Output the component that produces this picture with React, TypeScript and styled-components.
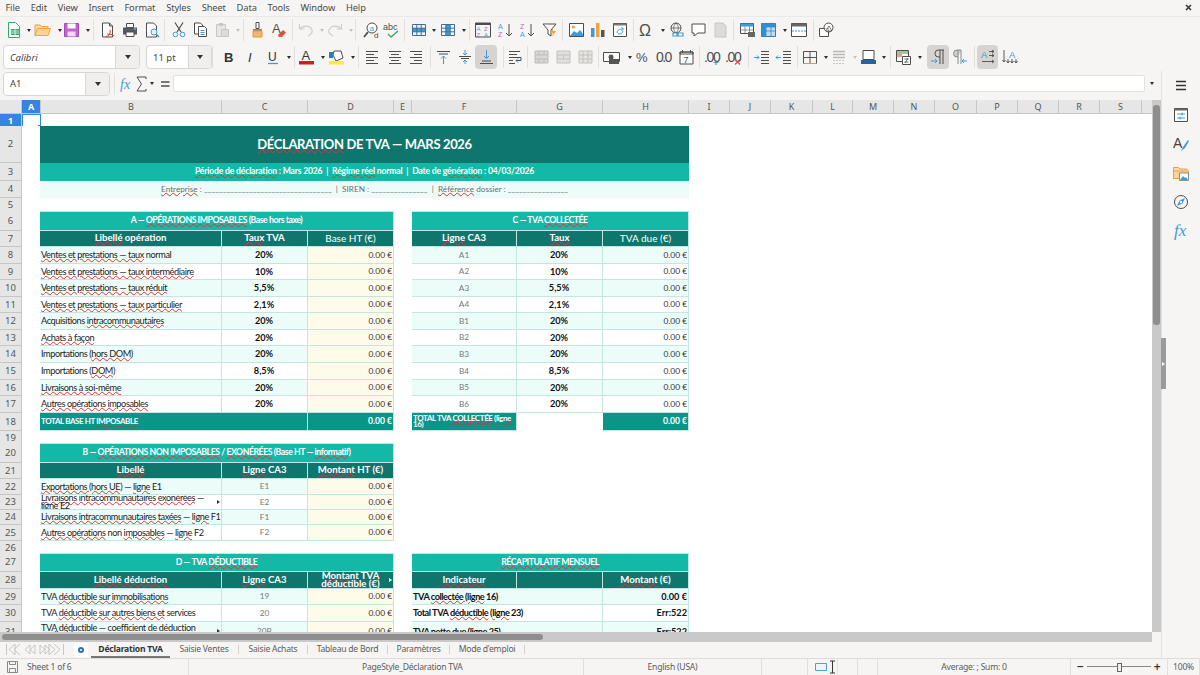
import type { ReactNode } from "react";
import styled, { createGlobalStyle } from "styled-components";

// ---------- Global Styles ----------
const GlobalStyle = createGlobalStyle`
  * { box-sizing: border-box; }
  html, body { margin: 0; height: 100%; overflow: hidden; background: #f6f5f4; }
  body { font-family: "Noto Sans", "Open Sans", sans-serif; color: #3d3d3d; }
`;

const DARK = "#0f766e";
const TEAL = "#14b8a6";
const TOTAL = "#0d9488";
const TINT = "#ecfdf9";
const INPUT = "#fffbeb";
const LINE = "#c3e6e0";
const CELL_FONT = `Lato, "Open Sans", sans-serif`;

// ---------- shell ----------
const Shell = styled.div`
  width: 1200px;
  height: 675px;
  display: flex;
  flex-direction: column;
  overflow: hidden;
`;
const MenuBar = styled.div`
  height: 17px;
  display: flex;
  align-items: center;
  border-bottom: 1px solid #ebe9e7;
  font-size: 9.3px;
  letter-spacing: -0.1px;
`;
const MenuItem = styled.span`
  padding: 0 5.4px;
  color: #4a4a4a;
`;
const CloseMark = styled.span`
  margin-left: auto;
  margin-right: 8px;
  display: flex;
`;
const Toolbar = styled.div<{ $h: number; $pad: number }>`
  height: ${(p) => p.$h}px;
  padding-left: ${(p) => p.$pad}px;
  display: flex;
  align-items: center;
`;
const Tool = styled.div<{ $w: number; $on?: boolean }>`
  width: ${(p) => p.$w}px;
  height: 24px;
  flex: none;
  display: flex;
  align-items: center;
  justify-content: ${(p) => (p.$on ? "center" : "flex-start")};
  border-radius: 4px;
  background: ${(p) => (p.$on ? "#d6d3d0" : "transparent")};
`;
const Sep = styled.div<{ $w: number }>`
  width: ${(p) => p.$w}px;
  height: 22px;
  flex: none;
  border-left: 1px solid #e2e0dd;
`;
const Drop = styled.div<{ $w: number; $dim?: boolean }>`
  width: ${(p) => p.$w}px;
  flex: none;
  display: flex;
  justify-content: center;
  &::before {
    content: "";
    border: 2.5px solid transparent;
    border-top: 3px solid ${(p) => (p.$dim ? "#c4c4c4" : "#2e2e2e")};
    border-bottom: 0;
  }
`;
const Combo = styled.div<{ $w: number; $btn: number; $mr: number }>`
  width: ${(p) => p.$w}px;
  height: 24px;
  margin-right: ${(p) => p.$mr}px;
  flex: none;
  display: grid;
  grid-template-columns: 1fr ${(p) => p.$btn}px;
  border: 1px solid #d8d5d2;
  border-radius: 4px;
  background: #fff;
  overflow: hidden;
`;
const ComboText = styled.div<{ $italic?: boolean }>`
  display: flex;
  align-items: center;
  padding-left: 6px;
  font-size: 9.5px;
  font-style: ${(p) => (p.$italic ? "italic" : "normal")};
  color: #444;
`;
const ComboBtn = styled.div`
  display: flex;
  align-items: center;
  justify-content: center;
  background: #f1efed;
  border-left: 1px solid #d8d5d2;
  &::before {
    content: "";
    border: 3.5px solid transparent;
    border-top: 4px solid #333;
    border-bottom: 0;
  }
`;
const Body = styled.div`
  height: 588px;
  display: flex;
`;
const Work = styled.div`
  width: 1161px;
  display: flex;
  flex-direction: column;
`;
const FormulaBar = styled.div`
  height: 29px;
  display: flex;
  align-items: center;
  padding: 0 0 3px 3px;
`;
const FormulaInput = styled.div`
  width: 972px;
  height: 17px;
  background: #fff;
  border: 1px solid #e4e2df;
  border-radius: 2px;
  flex: none;
`;

// ---------- sheet ----------
const SheetArea = styled.div`
  height: 532px;
  display: flex;
`;
const Viewport = styled.div`
  width: 1152px;
  overflow: hidden;
  background: #fff;
`;
const ColHeads = styled.div`
  height: 14px;
  display: flex;
  background: #e6e6e6;
  border-bottom: 1px solid #c6c6c6;
`;
const ColHead = styled.div<{ $w: number; $on?: boolean }>`
  width: ${(p) => p.$w}px;
  flex: none;
  display: flex;
  align-items: center;
  justify-content: center;
  font-size: 9px;
  color: ${(p) => (p.$on ? "#fff" : "#555")};
  font-weight: ${(p) => (p.$on ? 700 : 400)};
  background: ${(p) => (p.$on ? "#3584e4" : "transparent")};
  border-right: 1px solid #c6c6c6;
`;
const Row = styled.div<{ $h: number }>`
  height: ${(p) => p.$h}px;
  display: grid;
  grid-template-columns: 22px 18px 182px 86px 86px 18px 105px 86px 86px;
  overflow: hidden;
`;
const RowHead = styled.div<{ $on?: boolean }>`
  display: flex;
  align-items: center;
  justify-content: center;
  font-size: 9.5px;
  color: ${(p) => (p.$on ? "#fff" : "#555")};
  font-weight: ${(p) => (p.$on ? 700 : 400)};
  background: ${(p) => (p.$on ? "#3584e4" : "#e6e6e6")};
  border-right: 1px solid #c6c6c6;
  border-bottom: 1px solid #c6c6c6;
`;
const CursorCell = styled.div`
  position: relative;
  width: 19px;
  border: 1px solid #3584e4;
  &::after {
    content: "";
    position: absolute;
    right: -1px;
    bottom: -1px;
    width: 3px;
    height: 3px;
    background: #3584e4;
  }
`;
const Blank = styled.div<{ $span?: number }>`
  grid-column: span ${(p) => p.$span ?? 1};
`;

type Kind = "title" | "band" | "info" | "section" | "head" | "label" | "strong" | "rate" | "code" | "money" | "total" | "totalMoney";

const edge = `border-right:1px solid ${LINE};border-bottom:1px solid ${LINE};`;
const kindCss: Record<Kind, string> = {
  title: `background:${DARK};color:#fff;font-weight:700;font-size:13px;letter-spacing:-0.35px;justify-content:center;`,
  band: `background:${TEAL};color:#fff;font-weight:700;font-size:8.6px;letter-spacing:-0.18px;justify-content:center;`,
  info: `background:${TINT};color:#6b6b6b;font-size:8.2px;justify-content:center;`,
  section: `background:${TEAL};color:#fff;font-weight:700;font-size:8.7px;letter-spacing:-0.45px;justify-content:center;border:1px solid ${LINE};border-left:0;`,
  head: `background:${DARK};color:#fff;font-weight:700;font-size:9.6px;justify-content:center;text-align:center;${edge}`,
  label: `color:#222;font-size:9.2px;letter-spacing:-0.42px;padding-left:1px;${edge}`,
  strong: `color:#111;font-weight:700;font-size:9.2px;letter-spacing:-0.47px;padding-left:1px;${edge}`,
  rate: `color:#111;font-weight:700;font-size:9.2px;padding-right:1px;${edge}`,
  code: `color:#777;font-size:8.2px;justify-content:center;${edge}`,
  money: `color:#333;font-size:8.4px;justify-content:flex-end;padding-right:1px;${edge}`,
  total: `background:${TOTAL};color:#fff;font-weight:700;font-size:8px;letter-spacing:-0.4px;padding-left:1px;${edge}`,
  totalMoney: `background:${TOTAL};color:#fff;font-weight:700;font-size:8.6px;justify-content:flex-end;padding-right:1px;${edge}`,
};

const Cell = styled.div<{ $k: Kind; $span?: number; $fill?: string; $align?: string; $thin?: boolean }>`
  position: relative;
  grid-column: span ${(p) => p.$span ?? 1};
  display: flex;
  align-items: center;
  font-family: ${CELL_FONT};
  line-height: 1.02;
  overflow: hidden;
  white-space: pre;
  ${(p) => kindCss[p.$k]}
  ${(p) => (p.$fill ? `background:${p.$fill};` : "")}
  ${(p) => (p.$align ? `justify-content:${p.$align};` : "")}
  ${(p) => (p.$thin ? "font-weight:400;font-size:10px;" : "")}
`;
const Wrapped = styled.span<{ $pr?: number }>`
  white-space: normal;
  display: block;
  line-height: 0.84;
  padding-right: ${(p) => p.$pr ?? 0}px;
`;
const Wave = styled.span`
  text-decoration: underline wavy #d9362c;
  text-decoration-thickness: 1px;
  text-underline-offset: 0;
`;
const Clip = styled.i<{ $color?: string }>`
  position: absolute;
  right: 1px;
  top: 50%;
  margin-top: -2px;
  border: 2px solid transparent;
  border-left: 3px solid ${(p) => p.$color ?? "#333"};
  border-right: 0;
`;

// ---------- scrollbars ----------
const VScroll = styled.div`
  width: 9px;
  background: #c9c9c9;
  padding: 5px 1px 0;
`;
const VThumb = styled.div`
  height: 220px;
  background: #8e8e8e;
  border-radius: 3px;
`;
const HScroll = styled.div`
  height: 10px;
  width: 1152px;
  background: #c9c9c9;
  padding: 2px;
`;
const HThumb = styled.div`
  width: 541px;
  height: 6px;
  background: #8e8e8e;
  border-radius: 3px;
`;

// ---------- tabs ----------
const TabBar = styled.div`
  height: 16px;
  display: flex;
  align-items: center;
  font-size: 8.6px;
  letter-spacing: -0.25px;
  padding-left: 5px;
`;
const NavIcons = styled.div`
  width: 69px;
  flex: none;
  display: flex;
  align-items: center;
`;
const NewTab = styled.div`
  width: 14px;
  height: 14px;
  margin-right: 3px;
  flex: none;
  display: flex;
  align-items: center;
  justify-content: center;
  background: #fff;
`;
const Tab = styled.div<{ $on?: boolean; $w: number }>`
  width: ${(p) => p.$w}px;
  height: 16px;
  flex: none;
  display: flex;
  align-items: center;
  justify-content: center;
  color: ${(p) => (p.$on ? "#333" : "#5c5c5c")};
  font-weight: ${(p) => (p.$on ? 700 : 400)};
  border-bottom: 2px solid ${(p) => (p.$on ? "#777" : "transparent")};
`;
const TabSep = styled.div`
  width: 1px;
  height: 9px;
  flex: none;
  background: #d5d3d0;
`;

// ---------- sidebar ----------
const Sidebar = styled.div`
  width: 39px;
  border-left: 1px solid #e4e2df;
  display: flex;
  flex-direction: column;
  align-items: center;
  gap: 11px;
  padding-top: 6px;
`;
const SideIcon = styled.div`
  width: 18px;
  height: 18px;
  display: flex;
  align-items: center;
  justify-content: center;
`;
const Collapse = styled.div`
  position: absolute;
  left: 1161px;
  top: 338px;
  width: 5px;
  height: 51px;
  background: #9b9b9b;
  display: flex;
  align-items: center;
  &::before {
    content: "";
    border: 2px solid transparent;
    border-left: 3px solid #fff;
    border-right: 0;
    margin-left: 1px;
  }
`;

// ---------- status ----------
const StatusBar = styled.div`
  height: 17px;
  display: flex;
  align-items: center;
  border-top: 1px solid #dedcd9;
  font-size: 8.6px;
  letter-spacing: -0.25px;
  color: #5c5c5c;
`;
const StatusCell = styled.div<{ $w: number; $pad?: number; $center?: boolean; $gap?: number }>`
  width: ${(p) => p.$w}px;
  height: 16px;
  flex: none;
  display: flex;
  align-items: center;
  gap: ${(p) => p.$gap ?? 9}px;
  padding-left: ${(p) => p.$pad ?? 0}px;
  justify-content: ${(p) => (p.$center ? "center" : "flex-start")};
  border-right: 1px solid #e2e0dd;
`;
const ZoomLine = styled.div`
  width: 64px;
  height: 1px;
  background: #888;
  position: relative;
  &::after {
    content: "";
    position: absolute;
    left: 30px;
    top: -3px;
    width: 3px;
    height: 7px;
    background: #eee;
    border: 1px solid #666;
  }
`;
const ZoomSign = styled.span`
  font-size: 12px;
  font-weight: 600;
  color: #333;
  line-height: 1;
`;

// ---------- icons ----------
const Glyphs = styled.svg`
  overflow: visible;
  flex: none;
`;
const Svg = ({ children, w = 16, h = 16 }: { children: ReactNode; w?: number; h?: number }) => (
  <Glyphs width={w} height={h} viewBox={`0 0 ${w} ${h}`} fill="none" strokeWidth="1">
    {children}
  </Glyphs>
);
const Label = ({ x, y, s, c, t, b, i, ls, serif }: { x: number; y: number; s: number; c: string; t: string; b?: boolean; i?: boolean; ls?: number; serif?: boolean }) => (
  <text
    x={x}
    y={y}
    fontSize={s}
    fill={c}
    letterSpacing={ls}
    fontFamily={serif ? "Liberation Serif, serif" : "Liberation Sans, sans-serif"}
    fontWeight={b ? 700 : 400}
    fontStyle={i ? "italic" : "normal"}
  >
    {t}
  </text>
);
const INK = "#4d4d4d";
const BLUE = "#3d9bdc";
const GRAY = "#c9c7c4";
const gridLines = (c: string) => <path d="M1.5 2.5h13v11h-13zM1.5 6.2h13M1.5 9.8h13M5.8 2.5v11M10.2 2.5v11" stroke={c} />;

const icons: Record<string, ReactNode> = {
  close: (
    <Svg w={7} h={7}>
      <path d="m1 1 5 5M6 1 1 6" stroke="#333" strokeWidth="1.5" />
    </Svg>
  ),
  newDoc: (
    <Svg w={14}>
      <path d="M1.5 .5h7l4 4v11h-11z" stroke="#3aa76d" fill="#fff" />
      <path d="M4 7h8v6H4z" fill="#3aa76d" />
      <path d="M4 9h8M4 11h8M8 7v6" stroke="#fff" strokeWidth=".7" />
    </Svg>
  ),
  open: (
    <Svg w={17}>
      <path d="M1 13.5V3h5l1.5 1.5H14v2" stroke="#e9a24a" fill="#fbdca9" />
      <path d="M1 13.5 3.5 6.5h13l-2.5 7z" stroke="#e9a24a" fill="#fcd49a" />
    </Svg>
  ),
  save: (
    <Svg w={15}>
      <path d="M.5 1.5h14v13H.5z" fill="#c265cf" stroke="#a44bb3" />
      <path d="M3.5 1.5h8v5h-8z" fill="#fff" />
      <path d="M3.5 9.5h8v5h-8z" fill="#f2d8f6" />
    </Svg>
  ),
  pdf: (
    <Svg w={14}>
      <path d="M1.5 1h7l3 3v11h-10z" stroke={INK} fill="#fff" />
      <path d="M8.5 1v3h3" stroke={INK} />
      <path d="M5 15c3-1 5-4 4-7M6 12c2 0 5 0 7 2" stroke="#e0503d" strokeWidth="1.2" />
    </Svg>
  ),
  print: (
    <Svg>
      <path d="M4.5 1.5h7v4h-7z" stroke={INK} fill="#fff" />
      <path d="M1 5.5h14v7H1z" fill="#555b61" />
      <path d="M4 10h8v4.5H4z" fill="#fff" stroke={INK} />
      <path d="M12 7h2" stroke="#8fd0f5" />
    </Svg>
  ),
  preview: (
    <Svg w={15}>
      <path d="M1.5 1h7l3 3v11h-10z" stroke={INK} fill="#fff" />
      <circle cx="9" cy="10" r="3" stroke={BLUE} fill="#e4f3fc" />
      <path d="m11 12 3 3" stroke={BLUE} strokeWidth="1.4" />
    </Svg>
  ),
  cut: (
    <Svg w={14}>
      <path d="M3 .5 9 10M11 .5 5 10" stroke={INK} strokeWidth="1.2" />
      <circle cx="3.4" cy="12.5" r="2.3" stroke={BLUE} />
      <circle cx="10.6" cy="12.5" r="2.3" stroke={BLUE} />
    </Svg>
  ),
  copy: (
    <Svg w={15}>
      <path d="M1.5 1h6l2 2v9h-8z" stroke={INK} fill="#fff" />
      <path d="M5.5 4.5h6l2 2v8h-8z" stroke={INK} fill="#fff" />
      <path d="M7.5 8.5h4M7.5 10.5h4M7.5 12.5h4" stroke={BLUE} />
    </Svg>
  ),
  paste: (
    <Svg w={14}>
      <path d="M1.5 2.5h9v12h-9z" stroke={GRAY} fill="#e8e6e3" />
      <path d="M4 1h4v3H4z" fill={GRAY} />
      <path d="M6.5 7.5h7v7h-7z" fill="#dedcd9" stroke={GRAY} />
    </Svg>
  ),
  clone: (
    <Svg w={13}>
      <path d="M5 .5h3v6H5z" stroke={INK} fill="#fff" />
      <path d="M2 7h9v2H2z" fill="#888" />
      <path d="M2 9h9v6H2z" fill="#f5b56a" stroke="#e8973c" />
    </Svg>
  ),
  clear: (
    <Svg w={14}>
      <Label x={0} y={11} s={13} c={INK} t="A" />
      <path d="m6 13 5-5 3 2.5-4 4.5H7z" fill="#e0503d" />
    </Svg>
  ),
  undo: (
    <Svg>
      <path d="M1.5 2v5h5M2 7c3-4 10-4 12 1 1 3-2 5-4 6" stroke="#d0cecb" strokeWidth="1.2" />
    </Svg>
  ),
  redo: (
    <Svg>
      <path d="M14.5 2v5h-5M14 7C11 3 4 3 2 8c-1 3 2 5 4 6" stroke="#d0cecb" strokeWidth="1.2" />
    </Svg>
  ),
  find: (
    <Svg>
      <circle cx="9" cy="6" r="5" stroke={INK} fill="#fff" />
      <path d="M5 10 1 15" stroke={INK} strokeWidth="1.8" />
      <Label x={6.5} y={9} s={8} c={BLUE} t="a" />
      <Label x={11} y={16} s={8} c={INK} t="d" />
    </Svg>
  ),
  spell: (
    <Svg>
      <Label x={0} y={8} s={9} c={INK} t="abc" />
      <path d="m5 12 3 3 7-6" stroke="#3aa76d" strokeWidth="1.4" />
    </Svg>
  ),
  rowIns: (
    <Svg>
      <path d="M1.5 6.2h13v3.6h-13z" fill={BLUE} />
      {gridLines("#3f6f94")}
    </Svg>
  ),
  colIns: (
    <Svg>
      <path d="M5.8 2.5h4.4v11H5.8z" fill={BLUE} />
      {gridLines("#3f6f94")}
    </Svg>
  ),
  sort: (
    <Svg>
      <path d="M.5 1h15v14H.5z" stroke={INK} />
      <path d="M.5 1h15v2H.5z" fill={INK} />
      <Label x={1.5} y={9} s={6} c={BLUE} t="A" />
      <Label x={1.5} y={14.5} s={6} c="#b565cf" t="Z" />
      <Label x={9} y={9} s={6} c="#b565cf" t="Z" />
      <Label x={9} y={14.5} s={6} c={BLUE} t="A" />
    </Svg>
  ),
  asc: (
    <Svg>
      <Label x={0} y={7} s={7} c={BLUE} t="A" />
      <Label x={0} y={15} s={7} c="#b565cf" t="Z" />
      <path d="M11 2v12M8 11l3 3 3-3" stroke={INK} />
    </Svg>
  ),
  desc: (
    <Svg>
      <Label x={0} y={7} s={7} c="#b565cf" t="Z" />
      <Label x={0} y={15} s={7} c={BLUE} t="A" />
      <path d="M11 2v12M8 11l3 3 3-3" stroke={INK} />
    </Svg>
  ),
  filter: (
    <Svg>
      <path d="M1 2h13L9 8v6l-3-2V8z" stroke={INK} fill="#fff" />
      <path d="M11 6 8 11h3l-1 4 4-6h-3z" fill="#f0a33e" />
    </Svg>
  ),
  image: (
    <Svg w={15}>
      <path d="M.5 1.5h14v13H.5z" stroke={INK} fill="#fff" />
      <circle cx="4.5" cy="5" r="1.6" fill="#f2a04a" />
      <path d="m1 14 4-5 3 2 3-3 3 4v2z" fill={BLUE} />
    </Svg>
  ),
  chart: (
    <Svg w={14}>
      <path d="M0 6h3.5v9H0z" fill={BLUE} />
      <path d="M5 1h3.5v14H5z" fill="#f0a33e" />
      <path d="M10 8h3.5v7H10z" fill="#555" />
    </Svg>
  ),
  pivot: (
    <Svg w={14}>
      <path d="M.5 1.5h13v13H.5z" stroke={INK} fill="#fff" />
      <path d="M.5 1.5h13v2H.5z" fill="#777" />
      <path d="M4 11c0-3 3-4 6-4M8.5 5 10.5 7 8.5 9M10 9c0 2-2 3-5 3" stroke={BLUE} />
    </Svg>
  ),
  omega: (
    <Svg w={15}>
      <Label x={0} y={14} s={16} c={INK} t="Ω" />
    </Svg>
  ),
  link: (
    <Svg>
      <circle cx="7" cy="6" r="5" stroke={INK} />
      <path d="M2 6h10M7 1c-3 3-3 7 0 10M7 1c3 3 3 7 0 10" stroke={INK} strokeWidth=".7" />
      <path d="M4 11h4v3H4zM9 11h5v3H9z" stroke={BLUE} strokeWidth="1.2" fill="#fff" />
    </Svg>
  ),
  comment: (
    <Svg w={15}>
      <path d="M1 2h13v9H7l-4 3v-3H1z" stroke={INK} fill="#fff" />
    </Svg>
  ),
  headers: (
    <Svg w={13}>
      <path d="M1 1h8l3 3v11H1z" fill="#dddbd8" stroke={GRAY} />
    </Svg>
  ),
  tablePrint: (
    <Svg>
      <path d="M.5 1.5h13v10H.5z" stroke={INK} fill="#fff" />
      <path d="M.5 1.5h13v3H.5z" fill={BLUE} />
      <path d="M.5 8h13M5 4.5v7M9.5 4.5v7" stroke={INK} strokeWidth=".6" />
      <path d="M8 10h7v5H8z" fill="#666" />
    </Svg>
  ),
  freeze: (
    <Svg w={15}>
      <path d="M.5 1.5h14v13H.5z" fill="#bcdcf2" stroke="#2f7fb8" />
      <path d="M.5 5h14M5 1.5v13M.5 9h14M10 1.5v13" stroke="#2f7fb8" strokeWidth=".7" />
      <path d="M.5 1.5H5v13H.5z" fill="#2f8fd0" />
      <path d="M.5 1.5h14V5H.5z" fill="#2f8fd0" />
    </Svg>
  ),
  split: (
    <Svg>
      <path d="M.5 1.5h15v13H.5z" stroke={INK} fill="#fff" />
      <path d="M.5 1.5h15v3H.5z" fill="#666" />
      <path d="M1 9h14" stroke={BLUE} strokeDasharray="2 1" />
    </Svg>
  ),
  shapes: (
    <Svg w={15}>
      <path d="M.5 6.5h9v8h-9z" stroke={INK} fill="#fff" />
      <circle cx="9.5" cy="5.5" r="4.5" stroke={INK} fill="#fff" fillOpacity=".6" />
      <path d="m7 9 3-5 3 5z" stroke={INK} strokeWidth=".7" />
    </Svg>
  ),
  bold: (
    <Svg w={11}>
      <Label x={0} y={13} s={13} c="#333" t="B" b />
    </Svg>
  ),
  italic: (
    <Svg w={11}>
      <Label x={1} y={13} s={13} c="#333" t="I" i />
    </Svg>
  ),
  under: (
    <Svg w={11}>
      <Label x={0} y={12} s={12} c="#333" t="U" />
      <path d="M0 14.5h10" stroke={BLUE} strokeWidth="1.3" />
    </Svg>
  ),
  fontColor: (
    <Svg w={17}>
      <Label x={3.5} y={11} s={13} c="#333" t="A" />
      <path d="M1 12h15v3.5H1z" fill="#c9211e" />
    </Svg>
  ),
  highlight: (
    <Svg w={17}>
      <path d="m6 2 7 0 2 7-7 3-3-6z" stroke={INK} fill="#fff" />
      <path d="M1 3h4v6H1z" fill="#2a7fc4" />
      <path d="M1 12h15v3.5H1z" fill="#ffef2b" />
    </Svg>
  ),
  alignL: <Svg w={14}><path d="M1 2.5h12M1 5.5h8M1 8.5h12M1 11.5h8M1 14.5h12" stroke={INK} /></Svg>,
  alignC: <Svg w={14}><path d="M1 2.5h12M3 5.5h8M1 8.5h12M3 11.5h8M1 14.5h12" stroke={INK} /></Svg>,
  alignR: <Svg w={14}><path d="M1 2.5h12M5 5.5h8M1 8.5h12M5 11.5h8M1 14.5h12" stroke={INK} /></Svg>,
  vTop: (
    <Svg w={13}>
      <path d="M0 2.5h13M2 5h9" stroke={INK} />
      <path d="M6.5 15V7M4 9.5l2.5-2.5L9 9.5" stroke={BLUE} />
    </Svg>
  ),
  vMid: (
    <Svg w={12}>
      <path d="M0 7.5h12M2 9.5h8" stroke={INK} />
      <path d="M6 1v5M4 4l2 2 2-2M6 15v-4M4 13l2-2 2 2" stroke={BLUE} />
    </Svg>
  ),
  vBot: (
    <Svg w={13}>
      <path d="M0 14.5h13M2 12h9" stroke={INK} />
      <path d="M6.5 1v8M4 7l2.5 2.5L9 7" stroke={BLUE} />
    </Svg>
  ),
  wrap: (
    <Svg w={14}>
      <path d="M1 2.5h11M1 5.5h8M1 8.5h12v3H8M1 11.5h4M1 14.5h6" stroke={INK} />
      <path d="m10 9.5-2 2 2 2" stroke={BLUE} />
    </Svg>
  ),
  merge: (
    <Svg w={15}>
      <path d="M1 2h13v12H1z" fill="#dad8d5" stroke="#bdbbb8" />
      <path d="M1 6h13M1 10h13M5 2v4M10 2v4M5 10v4M10 10v4" stroke="#bdbbb8" />
    </Svg>
  ),
  merge2: (
    <Svg w={15}>
      <path d="M1 2h13v12H1z" fill="#e2e0dd" stroke="#c4c2bf" />
      <path d="M1 6h13M1 10h13M7.5 6v4" stroke="#c4c2bf" />
    </Svg>
  ),
  merge3: (
    <Svg w={15}>
      <path d="M1 2h13v12H1z" fill="#e6e4e1" stroke="#c4c2bf" />
      <path d="M1 6h13M1 10h13M5 2v12M10 2v12" stroke="#c4c2bf" />
    </Svg>
  ),
  currency: (
    <Svg w={18}>
      <path d="M.5 3.5h16v9H.5z" stroke={INK} fill="#fff" />
      <circle cx="8" cy="8" r="2.5" fill="#555" />
      <path d="M6 10h5v5H6zM11 10h5v5h-5z" fill="#555" />
    </Svg>
  ),
  percent: (
    <Svg w={12}>
      <Label x={0} y={13} s={13} c={INK} t="%" />
    </Svg>
  ),
  number: (
    <Svg>
      <Label x={0} y={13} s={14} c={INK} t="0.0" ls={-1.6} />
    </Svg>
  ),
  date: (
    <Svg w={15}>
      <path d="M1 3h13v12H1z" stroke={INK} fill="#fff" />
      <path d="M1 3h13v2H1zM3.5 1v3M11.5 1v3" stroke={INK} />
      <Label x={4.5} y={13.5} s={9} c={INK} t="7" />
    </Svg>
  ),
  addDec: (
    <Svg w={17}>
      <Label x={0} y={13} s={14} c={INK} t=".00" ls={-1.4} />
      <path d="M12 11v5M9.5 13.5h5" stroke={BLUE} strokeWidth="1.2" />
    </Svg>
  ),
  delDec: (
    <Svg w={17}>
      <Label x={0} y={13} s={14} c={INK} t=".00" ls={-1.4} />
      <path d="m10 10.5 5 5M15 10.5l-5 5" stroke="#e0503d" strokeWidth="1.2" />
    </Svg>
  ),
  indent: (
    <Svg w={15}>
      <path d="M7 2.5h8M7 5.5h8M7 8.5h8M7 11.5h8M7 14.5h8" stroke={INK} />
      <path d="M0 8.5h5M3 6.5l2 2-2 2" stroke={BLUE} />
    </Svg>
  ),
  outdent: (
    <Svg w={15}>
      <path d="M7 2.5h8M7 5.5h8M7 8.5h8M7 11.5h8M7 14.5h8" stroke={INK} />
      <path d="M0 8.5h5M2 6.5l-2 2 2 2" stroke={BLUE} />
    </Svg>
  ),
  borders: (
    <Svg w={14}>
      <path d="M.5 2.5h13v12H.5zM7 2.5v12M.5 8.5h13" stroke="#555" />
      <path d="M.5 14.5h13" stroke="#e8973c" />
    </Svg>
  ),
  borderStyle: (
    <Svg w={14}>
      <path d="M1 2.5h12M1 5.5h12M1 8.5h12" stroke="#bbb9b6" strokeWidth="1.4" />
      <path d="M1 11.5h12M1 14.5h12" stroke="#c9c7c4" strokeDasharray="2 1" />
    </Svg>
  ),
  borderColor: (
    <Svg w={17}>
      <path d="M3 1.5h11v9H3z" stroke={INK} fill="#fff" />
      <path d="M1 11h15v4H1z" fill="#1e66a8" />
    </Svg>
  ),
  conditional: (
    <Svg w={15}>
      <path d="M.5 1.5h12v11H.5z" stroke={INK} fill="#fff" />
      <path d="M1 2h11v3H1z" fill="#8fcf9a" />
      <path d="M1 5h5v3H1z" fill="#ee9a8c" />
      <path d="M6.5 7.5h8v8h-8z" stroke={INK} fill="#fff" />
      <path d="M8.5 10h4M8.5 13h4M12 9l-3 5" stroke={INK} strokeWidth=".8" />
    </Svg>
  ),
  ltr: (
    <Svg w={14}>
      <path d="M13 1H7.5a3.5 3.5 0 0 0 0 7H9M9 1v14M12 1v14" stroke={INK} />
      <path d="M0 12h6M4 10l2 2-2 2" stroke={BLUE} />
    </Svg>
  ),
  rtl: (
    <Svg w={14}>
      <path d="M8 1H4a3 3 0 0 0 0 7h1" stroke="#8a8a8a" fill="#cfcdca" />
      <path d="M5 1v14M8 1v14" stroke="#8a8a8a" />
      <path d="M14 12H9M11 10l-2 2 2 2" stroke={BLUE} />
    </Svg>
  ),
  horiz: (
    <Svg w={14}>
      <Label x={0} y={9} s={9.5} c={BLUE} t="A" />
      <path d="M8 2.5h5M11 1l2 1.5L11 4M8 6.5h5M11 5l2 1.5L11 8M1 12.5h12M11 11l2 1.5-2 1.5" stroke={INK} strokeWidth=".9" />
    </Svg>
  ),
  vert: (
    <Svg>
      <Label x={7} y={9} s={9.5} c={BLUE} t="A" />
      <path d="M2 1v12M.5 11 2 13l1.5-2M6 10v4M4.5 12 6 14l1.5-2M10 10v4M8.5 12 10 14l1.5-2M14 10v4M12.5 12 14 14l1.5-2" stroke={INK} strokeWidth=".9" />
    </Svg>
  ),
  fx: (
    <Svg w={12}>
      <Label x={0} y={13} s={14} c={BLUE} t="fx" i serif />
    </Svg>
  ),
  sigma: (
    <Svg w={11}>
      <path d="M10 3V1H1l4.5 7L1 15h9v-2" stroke={INK} />
    </Svg>
  ),
  equals: (
    <Svg w={9}>
      <path d="M0 6h8.5M0 10h8.5" stroke={INK} strokeWidth="1.6" />
    </Svg>
  ),
  menu: (
    <Svg w={12}>
      <path d="M1 3.5h10M1 7.5h10M1 11.5h10" stroke="#333" strokeWidth="1.3" />
    </Svg>
  ),
  props: (
    <Svg w={14}>
      <path d="M.5 1.5h13v13H.5z" stroke={INK} fill="#fff" />
      <path d="M.5 1.5h13v2H.5z" fill="#666" />
      <path d="M3 7h8M3 11h8" stroke={BLUE} />
      <path d="M8 5.5v3M6 9.5v3" stroke={BLUE} />
    </Svg>
  ),
  styles: (
    <Svg>
      <Label x={0} y={12} s={14} c="#444" t="A" />
      <path d="m8 15 2-4 5-7 1 1-4 7z" fill={BLUE} />
    </Svg>
  ),
  gallery: (
    <Svg>
      <path d="M.5 13.5V2.5h5l1.5 1.5h7v2" stroke="#e9a24a" fill="#fbdca9" />
      <path d="M.5 13.5V6h15v7.5z" fill="#fcd49a" stroke="#e9a24a" />
      <path d="M6.5 8h9v7.5h-9z" fill="#fff" stroke="#666" strokeWidth=".7" />
      <path d="m7 15 3-4 2 2 1-1 2 3z" fill={BLUE} />
    </Svg>
  ),
  navigator: (
    <Svg>
      <circle cx="8" cy="8" r="6.5" stroke={INK} />
      <path d="m12 4-2.5 5.5L4 12l2.5-5.5z" fill={BLUE} />
      <circle cx="8" cy="8" r="1.2" fill="#fff" />
    </Svg>
  ),
  fxBig: (
    <Svg>
      <Label x={1} y={13} s={17} c={BLUE} t="fx" i serif />
    </Svg>
  ),
  saveDoc: (
    <Svg w={11} h={12}>
      <path d="M.5.5h10v11H.5z" stroke="#888" />
      <path d="M2.5.5h6v3h-6zM2.5 7.5h6v4h-6z" stroke="#888" />
    </Svg>
  ),
  docDot: (
    <Svg w={8} h={8}>
      <circle cx="4" cy="4" r="3" fill="#2a6fb8" />
      <circle cx="4" cy="4" r="1" fill="#fff" />
    </Svg>
  ),
  nav: (
    <Svg w={60} h={13}>
      <path d="M1.5 1v11M10 1 4 6.5l6 5.5zM15 1 9 6.5l6 5.5" stroke={GRAY} />
      <path d="M25 2l-5 4.5 5 4.5zM30 2l-5 4.5 5 4.5z" stroke={GRAY} />
      <path d="M35 2l5 4.5-5 4.5zM40 2l5 4.5-5 4.5z" stroke={GRAY} />
      <path d="M44 1l6 5.5-6 5.5zM49 1l6 5.5-6 5.5M58.5 1v11" stroke={GRAY} />
    </Svg>
  ),
  selection: (
    <Svg w={22} h={14}>
      <path d="M.5 3.5h11v7H.5z" stroke="#4aa3c9" fill="#e9f5fa" />
      <path d="M15 1h5M17.5 1v12M15 13h5" stroke="#333" />
    </Svg>
  ),
};

// ---------- toolbar data ----------
type ToolItem = [string, number];

const topTools: ToolItem[] = [
  ["newDoc", 17], ["v", 10], ["open", 21], ["v", 9], ["save", 19], ["v", 10], ["|", 8],
  ["pdf", 21], ["print", 23], ["preview", 19], ["|", 8],
  ["cut", 21], ["copy", 22], ["paste", 18], ["x", 10], ["|", 8],
  ["clone", 21], ["clear", 20], ["|", 6],
  ["undo", 18], ["x", 11], ["redo", 19], ["x", 9], ["|", 8],
  ["find", 20], ["spell", 21], ["|", 7],
  ["rowIns", 17], ["v", 12], ["colIns", 18], ["v", 11], ["|", 6],
  ["sort", 23], ["asc", 22], ["desc", 22], ["filter", 20], ["|", 7],
  ["image", 22], ["chart", 22], ["pivot", 20], ["|", 6],
  ["omega", 17], ["v", 13], ["link", 22], ["comment", 23], ["headers", 19], ["|", 7],
  ["tablePrint", 21], ["freeze", 18], ["v", 12], ["split", 22], ["|", 6],
  ["shapes", 20],
];

const formatTools: ToolItem[] = [
  ["|", 12], ["bold", 23], ["italic", 21], ["under", 16], ["v", 10], ["|", 4],
  ["fontColor", 19], ["v", 11], ["highlight", 19], ["v", 11], ["|", 7],
  ["alignL", 23], ["alignC", 21], ["alignR", 21], ["|", 7],
  ["vTop", 22], ["vMid", 16], ["vBot!", 22], [" ", 6], ["|", 5],
  ["wrap", 19], ["|", 7],
  ["merge", 22], ["merge2", 22], ["merge3", 20], ["|", 5],
  ["currency", 20], ["v", 13], ["percent", 20], ["number", 23], ["date", 20], ["|", 5],
  ["addDec", 21], ["delDec", 23], ["|", 6],
  ["indent", 22], ["outdent", 21], ["|", 6],
  ["borders", 17], ["v", 12], ["borderStyle", 17], ["x", 11], ["borderColor", 18], ["v", 12], ["|", 6],
  ["conditional", 17], ["v", 13], [" ", 1],
  ["ltr!", 22], [" ", 4], ["rtl", 21], ["|", 3],
  ["horiz!", 21], [" ", 4], ["vert", 16],
];

const formulaTools: ToolItem[] = [["|", 6], ["fx", 16], ["sigma", 12], ["v", 8], [" ", 5], ["equals", 12]];

function ToolRun({ items }: { items: ToolItem[] }) {
  return (
    <>
      {items.map(([key, w], i) => {
        if (key === "|") return <Sep key={i} $w={w} />;
        if (key === " ") return <Tool key={i} $w={w} />;
        if (key === "v" || key === "x") return <Drop key={i} $w={w} $dim={key === "x"} />;
        const on = key.endsWith("!");
        return (
          <Tool key={i} $w={w} $on={on}>
            {icons[key.replace("!", "")]}
          </Tool>
        );
      })}
    </>
  );
}

// ---------- sheet data ----------
const menus = ["File", "Edit", "View", "Insert", "Format", "Styles", "Sheet", "Data", "Tools", "Window", "Help"];
const columns: [string, number][] = [
  ["A", 19], ["B", 181], ["C", 86], ["D", 86], ["E", 18], ["F", 105], ["G", 86], ["H", 86],
  ["I", 41], ["J", 41], ["K", 42], ["L", 40], ["M", 41], ["N", 41], ["O", 42], ["P", 41], ["Q", 41], ["R", 41], ["S", 42],
];
const heights: Record<number, number> = {
  1: 12, 2: 37, 3: 18, 4: 17, 5: 13, 6: 20, 7: 16, 8: 17, 9: 16, 10: 17, 11: 16, 12: 17, 13: 16, 14: 17, 15: 17, 16: 16, 17: 17,
  18: 18, 19: 12, 20: 20, 21: 16, 22: 16, 23: 15, 24: 15, 25: 16, 26: 12, 27: 19, 28: 17, 29: 16, 30: 17, 31: 20,
};

const taxable = [
  ["{Ventes et prestations — taux} normal", "20%", "A1"],
  ["{Ventes et prestations — taux intermédiaire}", "10%", "A2"],
  ["{Ventes et prestations — taux réduit}", "5,5%", "A3"],
  ["{Ventes et prestations — taux particulier}", "2,1%", "A4"],
  ["Acquisitions {intracommunautaires}", "20%", "B1"],
  ["{Achats à façon}", "20%", "B2"],
  ["Importations ({hors DOM})", "20%", "B3"],
  ["Importations ({DOM})", "8,5%", "B4"],
  ["{Livraisons à soi-même}", "20%", "B5"],
  ["{Autres opérations imposables}", "20%", "B6"],
];

function Marked({ text }: { text: string }) {
  return (
    <span>
      {text.split(/(\{[^}]+\})/).map((part, i) =>
        part.startsWith("{") ? <Wave key={i}>{part.slice(1, -1)}</Wave> : <span key={i}>{part}</span>
      )}
    </span>
  );
}

function SheetRow({ n, children }: { n: number; children?: ReactNode }) {
  return (
    <Row $h={heights[n]}>
      <RowHead $on={n === 1}>{n}</RowHead>
      {n === 1 ? <CursorCell /> : <Blank />}
      {children}
    </Row>
  );
}

const tint = (n: number, first: number) => ((n - first) % 2 === 0 ? TINT : "#fff");
const ZERO = "0.00 €";

export default function App() {
  return (
    <>
      <GlobalStyle />
      <Shell>
        <MenuBar>
          {menus.map((m) => (
            <MenuItem key={m}>{m}</MenuItem>
          ))}
          <CloseMark>{icons.close}</CloseMark>
        </MenuBar>
        <Toolbar $h={27} $pad={7}>
          <ToolRun items={topTools} />
        </Toolbar>
        <Toolbar $h={27} $pad={3}>
          <Combo $w={137} $btn={24} $mr={6}>
            <ComboText $italic>Calibri</ComboText>
            <ComboBtn />
          </Combo>
          <Combo $w={66} $btn={23} $mr={0}>
            <ComboText>11 pt</ComboText>
            <ComboBtn />
          </Combo>
          <ToolRun items={formatTools} />
        </Toolbar>
        <Body>
          <Work>
            <FormulaBar>
              <Combo $w={107} $btn={24} $mr={4}>
                <ComboText>A1</ComboText>
                <ComboBtn />
              </Combo>
              <ToolRun items={formulaTools} />
              <FormulaInput />
              <Drop $w={14} />
            </FormulaBar>
            <SheetArea>
              <Viewport>
                <ColHeads>
                  <ColHead $w={22} />
                  {columns.map(([c, w]) => (
                    <ColHead key={c} $w={w} $on={c === "A"}>
                      {c}
                    </ColHead>
                  ))}
                </ColHeads>
                <SheetRow n={1} />
                <SheetRow n={2}>
                  <Cell $k="title" $span={7}>
                    <Marked text="{DÉCLARATION} DE TVA — MARS 2026" />
                  </Cell>
                </SheetRow>
                <SheetRow n={3}>
                  <Cell $k="band" $span={7}>
                    <Marked text="{Période de déclaration} : Mars 2026  |  {Régime réel} normal  |  Date de {génération} : 04/03/2026" />
                  </Cell>
                </SheetRow>
                <SheetRow n={4}>
                  <Cell $k="info" $span={7}>
                    <Marked text="{Entreprise} : __________________________________  |  SIREN : _______________  |  {Référence} dossier : ________________" />
                  </Cell>
                </SheetRow>
                <SheetRow n={5} />
                <SheetRow n={6}>
                  <Cell $k="section" $span={3}>
                    <Marked text="A — {OPÉRATIONS IMPOSABLES} (Base hors taxe)" />
                  </Cell>
                  <Blank />
                  <Cell $k="section" $span={3}>
                    <Marked text="C — TVA {COLLECTÉE}" />
                  </Cell>
                </SheetRow>
                <SheetRow n={7}>
                  <Cell $k="head"><Marked text="{Libellé} opération" /></Cell>
                  <Cell $k="head"><Marked text="{Taux} TVA" /></Cell>
                  <Cell $k="head" $thin>Base HT (€)</Cell>
                  <Blank />
                  <Cell $k="head"><Marked text="{Ligne} CA3" /></Cell>
                  <Cell $k="head"><Marked text="{Taux}" /></Cell>
                  <Cell $k="head" $thin>TVA due (€)</Cell>
                </SheetRow>
                {taxable.map(([label, rate, code], i) => {
                  const n = 8 + i;
                  const fill = tint(n, 8);
                  return (
                    <SheetRow key={n} n={n}>
                      <Cell $k="label" $fill={fill}><Marked text={label} /></Cell>
                      <Cell $k="rate" $fill={fill} $align="center">{rate}</Cell>
                      <Cell $k="money" $fill={INPUT}>{ZERO}</Cell>
                      <Blank />
                      <Cell $k="code" $fill={fill}>{code}</Cell>
                      <Cell $k="rate" $fill={fill} $align="center">{rate}</Cell>
                      <Cell $k="money" $fill={fill}>{ZERO}</Cell>
                    </SheetRow>
                  );
                })}
                <SheetRow n={18}>
                  <Cell $k="total" $span={2}><Marked text="TOTAL BASE HT {IMPOSABLE}" /></Cell>
                  <Cell $k="totalMoney">{ZERO}</Cell>
                  <Blank />
                  <Cell $k="total">
                    <Wrapped><Marked text="TOTAL TVA {COLLECTÉE} ({ligne} 16)" /></Wrapped>
                  </Cell>
                  <Blank />
                  <Cell $k="totalMoney">{ZERO}</Cell>
                </SheetRow>
                <SheetRow n={19} />
                <SheetRow n={20}>
                  <Cell $k="section" $span={3}>
                    <Marked text="B — {OPÉRATIONS NON IMPOSABLES} / {EXONÉRÉES} (Base HT — {informatif})" />
                  </Cell>
                </SheetRow>
                <SheetRow n={21}>
                  <Cell $k="head"><Marked text="{Libellé}" /></Cell>
                  <Cell $k="head"><Marked text="{Ligne} CA3" /></Cell>
                  <Cell $k="head"><Marked text="{Montant} HT (€)" /></Cell>
                </SheetRow>
                <SheetRow n={22}>
                  <Cell $k="label" $fill={TINT}><Marked text="{Exportations (hors UE)} — {ligne} E1" /></Cell>
                  <Cell $k="code" $fill={TINT}>E1</Cell>
                  <Cell $k="money" $fill={INPUT}>{ZERO}</Cell>
                </SheetRow>
                <SheetRow n={23}>
                  <Cell $k="label">
                    <Wrapped $pr={8}><Marked text="{Livraisons intracommunautaires exonérées} — {ligne} E2" /></Wrapped>
                    <Clip />
                  </Cell>
                  <Cell $k="code">E2</Cell>
                  <Cell $k="money" $fill={INPUT}>{ZERO}</Cell>
                </SheetRow>
                <SheetRow n={24}>
                  <Cell $k="label" $fill={TINT}><Marked text="{Livraisons intracommunautaires taxées} — {ligne} F1" /></Cell>
                  <Cell $k="code" $fill={TINT}>F1</Cell>
                  <Cell $k="money" $fill={INPUT}>{ZERO}</Cell>
                </SheetRow>
                <SheetRow n={25}>
                  <Cell $k="label"><Marked text="{Autres opérations} non {imposables} — {ligne} F2" /></Cell>
                  <Cell $k="code">F2</Cell>
                  <Cell $k="money" $fill={INPUT}>{ZERO}</Cell>
                </SheetRow>
                <SheetRow n={26} />
                <SheetRow n={27}>
                  <Cell $k="section" $span={3}>
                    <Marked text="D — TVA {DÉDUCTIBLE}" />
                  </Cell>
                  <Blank />
                  <Cell $k="section" $span={3}>
                    <Marked text="{RÉCAPITULATIF MENSUEL}" />
                  </Cell>
                </SheetRow>
                <SheetRow n={28}>
                  <Cell $k="head"><Marked text="{Libellé déduction}" /></Cell>
                  <Cell $k="head"><Marked text="{Ligne} CA3" /></Cell>
                  <Cell $k="head">
                    <Wrapped><Marked text="{Montant} TVA {déductible} (€)" /></Wrapped>
                    <Clip $color="#fff" />
                  </Cell>
                  <Blank />
                  <Cell $k="head"><Marked text="{Indicateur}" /></Cell>
                  <Cell $k="head" />
                  <Cell $k="head"><Marked text="{Montant} (€)" /></Cell>
                </SheetRow>
                <SheetRow n={29}>
                  <Cell $k="label" $fill={TINT}><Marked text="TVA {déductible sur immobilisations}" /></Cell>
                  <Cell $k="code" $fill={TINT}>19</Cell>
                  <Cell $k="money" $fill={INPUT}>{ZERO}</Cell>
                  <Blank />
                  <Cell $k="strong" $fill={TINT} $span={2}><Marked text="TVA {collectée (ligne} 16)" /></Cell>
                  <Cell $k="rate" $fill={TINT} $align="flex-end">{ZERO}</Cell>
                </SheetRow>
                <SheetRow n={30}>
                  <Cell $k="label"><Marked text="TVA {déductible sur autres biens et} services" /></Cell>
                  <Cell $k="code">20</Cell>
                  <Cell $k="money" $fill={INPUT}>{ZERO}</Cell>
                  <Blank />
                  <Cell $k="strong" $span={2}><Marked text="Total TVA {déductible} ({ligne} 23)" /></Cell>
                  <Cell $k="rate" $align="flex-end">Err:522</Cell>
                </SheetRow>
                <SheetRow n={31}>
                  <Cell $k="label" $fill={TINT}>
                    <Wrapped $pr={8}><Marked text="TVA {déductible} — coefficient de {déduction} applicable" /></Wrapped>
                    <Clip />
                  </Cell>
                  <Cell $k="code" $fill={TINT}>20B</Cell>
                  <Cell $k="money" $fill={INPUT}>{ZERO}</Cell>
                  <Blank />
                  <Cell $k="strong" $fill={TINT} $span={2}><Marked text="TVA nette due ({ligne} 25)" /></Cell>
                  <Cell $k="rate" $fill={TINT} $align="flex-end">Err:522</Cell>
                </SheetRow>
              </Viewport>
              <VScroll>
                <VThumb />
              </VScroll>
            </SheetArea>
            <HScroll>
              <HThumb />
            </HScroll>
            <TabBar>
              <NavIcons>{icons.nav}</NavIcons>
              <NewTab>{icons.docDot}</NewTab>
              <Tab $on $w={79}>Déclaration TVA</Tab>
              <Tab $w={68}>Saisie Ventes</Tab>
              <TabSep />
              <Tab $w={68}>Saisie Achats</Tab>
              <TabSep />
              <Tab $w={79}>Tableau de Bord</Tab>
              <TabSep />
              <Tab $w={61}>Paramètres</Tab>
              <TabSep />
              <Tab $w={74}>Mode d'emploi</Tab>
              <TabSep />
            </TabBar>
          </Work>
          <Sidebar>
            <SideIcon>{icons.menu}</SideIcon>
            <SideIcon>{icons.props}</SideIcon>
            <SideIcon>{icons.styles}</SideIcon>
            <SideIcon>{icons.gallery}</SideIcon>
            <SideIcon>{icons.navigator}</SideIcon>
            <SideIcon>{icons.fxBig}</SideIcon>
          </Sidebar>
          <Collapse />
        </Body>
        <StatusBar>
          <StatusCell $w={189} $pad={7}>
            {icons.saveDoc}
            <span>Sheet 1 of 6</span>
          </StatusCell>
          <StatusCell $w={395} $pad={173}>PageStyle_Déclaration TVA</StatusCell>
          <StatusCell $w={178} $center>English (USA)</StatusCell>
          <StatusCell $w={46} />
          <StatusCell $w={30} $pad={7}>{icons.selection}</StatusCell>
          <StatusCell $w={20} />
          <StatusCell $w={20} />
          <StatusCell $w={193} $center>Average: ; Sum: 0</StatusCell>
          <StatusCell $w={97} $pad={6} $gap={3}>
            <ZoomSign>−</ZoomSign>
            <ZoomLine />
            <ZoomSign>+</ZoomSign>
          </StatusCell>
          <StatusCell $w={32} $center>100%</StatusCell>
        </StatusBar>
      </Shell>
    </>
  );
}
